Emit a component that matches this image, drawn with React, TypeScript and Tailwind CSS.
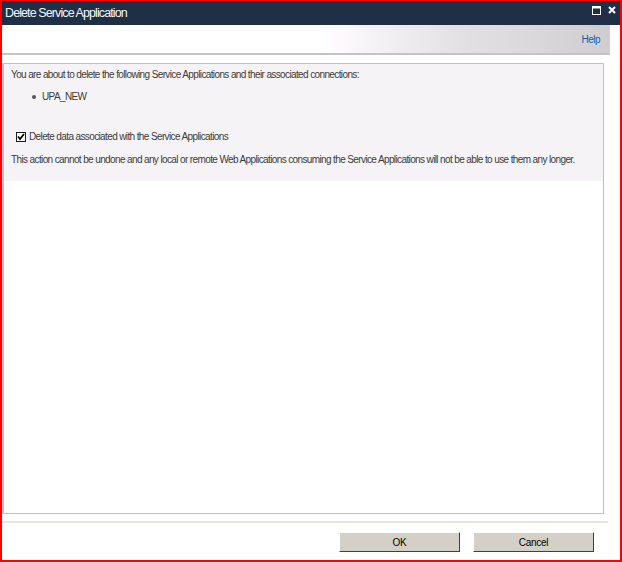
import { useState } from "react";

const font = { fontFamily: '"Liberation Sans", Arial, sans-serif' };

export default function App() {
  const [deleteData, setDeleteData] = useState(true);

  return (
    <div
      className="w-[622px] h-[562px] flex flex-col bg-white border-t border-x-2 border-b-2 border-[#ff0000] overflow-hidden"
      style={font}
    >
      {/* title bar */}
      <div className="h-[24px] shrink-0 bg-[#1f2f48] flex items-center justify-between pl-[3px] pr-[4px]">
        <span className="text-[#f4f6f9] text-[12.5px] tracking-[-0.9px]">Delete Service Application</span>
        <div className="flex items-center gap-[7px] pb-[6px]">
          <svg width="9" height="9" viewBox="0 0 9 9">
            <rect x="0.5" y="0.5" width="8" height="8" fill="none" stroke="#fff" strokeWidth="1" />
            <rect x="0" y="0" width="9" height="2.5" fill="#fff" />
          </svg>
          <svg width="8" height="8" viewBox="0 0 8 8">
            <path d="M1 1 L7 7 M7 1 L1 7" stroke="#fff" strokeWidth="2" />
          </svg>
        </div>
      </div>

      {/* ribbon */}
      <div className="h-[30px] shrink-0 mr-[10px] border-b-2 border-[#c4c4c4] bg-[linear-gradient(to_right,#ffffff_0%,#ffffff_52%,#fdf9fd_56%,#eeecee_66%,#e2e0e2_76%,#dcd9dc_86%,#d0cdd0_100%)] flex items-center justify-end pr-[10px]">
        <a className="text-[#0b5fb4] text-[10px] tracking-[-0.5px] cursor-pointer">Help</a>
      </div>

      {/* content */}
      <div className="mt-[8px] mr-[16px] h-[451px] shrink-0 border border-l-2 border-[#b1c3d9] bg-white">
        <div className="bg-[#f6f3f6] px-[7px] pt-[4px] pb-[14px] text-[10px] tracking-[-0.62px] text-[#3b3b3b] leading-[14px]">
          <p>You are about to delete the following Service Applications and their associated connections:</p>
          <ul className="mt-[8px] pl-[21px] flex flex-col">
            <li className="flex items-center gap-[6px]">
              <span className="w-[4px] h-[4px] rounded-full bg-[#555]" />
              UPA_NEW
            </li>
          </ul>
          <label className="mt-[26px] pl-[5px] flex items-center gap-[3px] cursor-pointer">
            <span
              onClick={() => setDeleteData(!deleteData)}
              className="w-[10px] h-[10px] border border-[#1c1c1c] bg-white flex items-center justify-center"
            >
              {deleteData && (
                <svg width="8" height="8" viewBox="0 0 8 8">
                  <path d="M1 3.5 L3 6 L7 1" fill="none" stroke="#000" strokeWidth="1.8" />
                </svg>
              )}
            </span>
            Delete data associated with the Service Applications
          </label>
          <p className="mt-[9px]">
            This action cannot be undone and any local or remote Web Applications consuming the Service Applications will not be able to use them any longer.
          </p>
        </div>
      </div>

      {/* footer */}
      <div className="mt-[7px] mr-[12px] h-[2px] shrink-0 bg-[#e8e6dc]" />
      <div className="mt-[9px] flex justify-end gap-[13px] pr-[26px]">
        <button className="w-[121px] h-[20px] bg-[#d4d0c8] border border-t-white border-l-white border-b-[#404040] border-r-[#404040] text-[10px] text-black tracking-[-0.3px]">
          OK
        </button>
        <button className="w-[121px] h-[20px] bg-[#d4d0c8] border border-t-white border-l-white border-b-[#404040] border-r-[#404040] text-[10px] text-black tracking-[-0.3px]">
          Cancel
        </button>
      </div>
    </div>
  );
}
